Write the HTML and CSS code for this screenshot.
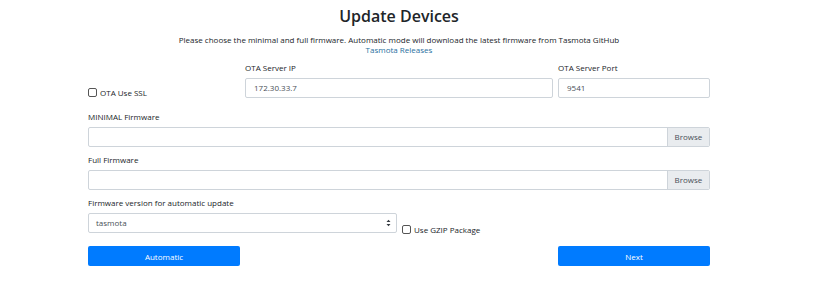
FILE: index.html
```html
<!DOCTYPE html>
<html>
<head>
<meta charset="utf-8">
<link rel="stylesheet" href="styles.css">
</head>
<body>
<div class="page">
  <h1 class="title">Update Devices</h1>
  <p class="intro">Please choose the minimal and full firmware. Automatic mode will download the latest firmware from Tasmota GitHub<br><a href="#" class="link">Tasmota Releases</a></p>

  <div class="row-top">
    <div class="col-ssl">
      <label class="check"><span class="box"></span>OTA Use SSL</label>
    </div>
    <div class="field">
      <div class="lbl">OTA Server IP</div>
      <div class="input">172.30.33.7</div>
    </div>
    <div class="field">
      <div class="lbl">OTA Server Port</div>
      <div class="input">9541</div>
    </div>
  </div>

  <div class="group">
    <div class="lbl">MINIMAL Firmware</div>
    <div class="file"><div class="file-input"></div><div class="browse">Browse</div></div>
  </div>
  <div class="group">
    <div class="lbl">Full Firmware</div>
    <div class="file"><div class="file-input"></div><div class="browse">Browse</div></div>
  </div>

  <div class="group group-select">
    <div class="lbl">Firmware version for automatic update</div>
    <div class="row-select">
      <div class="select">tasmota
        <svg class="arrows" width="5" height="8" viewBox="0 0 5 8"><path d="M0.5 3 L2.5 0.8 L4.5 3 Z M0.5 5 L2.5 7.2 L4.5 5 Z" fill="#343a40"/></svg>
      </div>
      <label class="check gzip"><span class="box"></span>Use GZIP Package</label>
    </div>
  </div>

  <div class="buttons">
    <button class="btn">Automatic</button>
    <button class="btn">Next</button>
  </div>
</div>
</body>
</html>
```
FILE: styles.css
```css
html, body { margin: 0; padding: 0; background: #fff; }
body { font-family: "Open Sans", "Noto Sans", sans-serif; color: #212529; font-size: 8px; }
.page { width: 622px; margin-left: 88px; }
.title { margin: 0; padding-top: 4px; height: 24px; font-size: 16px; font-weight: 600; line-height: 24px; text-align: center; color: #212529; }
.intro { margin: 7px 0 0; text-align: center; line-height: 10px; height: 20px; font-size: 8px; color: #212529; }
.link { color: #2a6fa0; text-decoration: none; }
.row-top { display: grid; grid-template-columns: 152px 1fr 152px; column-gap: 5px; margin-top: 6px; margin-bottom: 12px; }
.col-ssl { padding-top: 26px; }
.lbl { height: 14px; line-height: 14px; margin-bottom: 3px; color: #212529; }
.input { height: 20px; box-sizing: border-box; border: 1px solid #ced4da; border-radius: 2px; padding: 0 8px; line-height: 18px; color: #495057; }
.check { display: flex; align-items: center; gap: 3px; height: 10px; color: #212529; }
.box { width: 7px; height: 7px; border: 1px solid #555; border-radius: 2px; display: inline-block; }
.group { margin-bottom: 6px; }
.group-select { margin-top: 1px; }
.file { display: flex; height: 20px; box-sizing: border-box; border: 1px solid #ced4da; border-radius: 2px; overflow: hidden; }
.file-input { flex: 1; }
.browse { width: 41px; background: #e9ecef; border-left: 1px solid #ced4da; line-height: 18px; text-align: center; color: #495057; }
.row-select { display: flex; align-items: flex-start; }
.select { position: relative; width: 309px; height: 20px; box-sizing: border-box; border: 1px solid #ced4da; border-radius: 2px; padding: 0 7px; line-height: 18px; color: #495057; }
.arrows { position: absolute; right: 5px; top: 5px; }
.gzip { margin-left: 5px; margin-top: 11px; }
.buttons { display: flex; justify-content: space-between; margin-top: 12px; }
.btn { width: 152px; height: 20px; border: none; border-radius: 2px; background: #007bff; color: #fff; font-family: "Open Sans", "Noto Sans", sans-serif; font-size: 8px; padding: 0; }
```
